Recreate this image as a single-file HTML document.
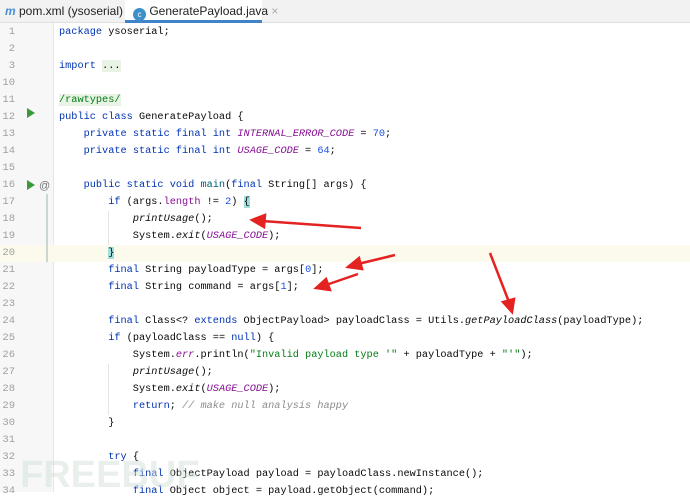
<!DOCTYPE html>
<html><head><style>
*{margin:0;padding:0;box-sizing:border-box}
body{width:690px;height:492px;overflow:hidden;background:#fff;position:relative;font-family:"Liberation Mono",monospace}
.tabs{position:absolute;left:0;top:0;width:690px;height:23px;background:#f2f2f2;border-bottom:1px solid #e0e0e0;font-family:"Liberation Sans",sans-serif;font-size:12px;color:#222}
.tab{position:absolute;top:0;height:23px;line-height:22px;white-space:nowrap}
.gut{position:absolute;left:0;top:23px;width:54px;height:469px;background:#f7f7f7;border-right:1px solid #e6e6e6}
.ln{position:absolute;left:0;width:15px;text-align:right;font-size:10.5px;color:#a0a0a0;height:17px;line-height:17px}
.cl{position:absolute;left:59px;height:17px;line-height:17px;font-size:10.25px;color:#080808;white-space:pre}
.k{color:#0033b3}.c{color:#871094;font-style:italic}.n{color:#1750eb}.s{color:#067d17}.i{font-style:italic}.cm{color:#8c8c8c;font-style:italic}.p{color:#871094}
</style></head><body>
<div class="tabs">
<div class="tab" style="left:5px"><span style="color:#4a8fd6;font-style:italic;font-weight:bold">m</span> pom.xml (ysoserial) <span style="color:#aaa">×</span></div>
<div class="tab" style="left:125px;width:137px;background:#fff;border-bottom:3px solid #4083c9;padding-left:8px"><span style="display:inline-block;width:13px;height:13px;border-radius:7px;background:#3d8fc9;color:#fff;font-size:8px;line-height:13px;text-align:center;vertical-align:-2px">c</span> GeneratePayload.java <span style="color:#aaa">×</span></div>
</div>
<div class="gut"></div>
<div style="position:absolute;left:0;top:245px;width:690px;height:17px;background:#fcfaed"></div>
<div style="position:absolute;left:46px;top:194px;width:2px;height:68px;background:#c8d8d0"></div>
<div style="position:absolute;left:108px;top:211px;width:1px;height:34px;background:#e4e4e4"></div>
<div style="position:absolute;left:108px;top:364px;width:1px;height:51px;background:#e4e4e4"></div>
<div id="c"></div>
<svg style="position:absolute;left:20px;top:108px" width="40" height="90"><polygon points="7,0 15,5 7,10" fill="#3a9a3a"/><polygon points="7,72 15,77 7,82" fill="#3a9a3a"/><text x="19" y="81" font-size="11" fill="#777" font-family="Liberation Sans">@</text></svg>
<svg style="position:absolute;left:0;top:0" width="690" height="492">
<g stroke="#e52222" stroke-width="2.5" fill="#e52222">
<line x1="361" y1="228" x2="262" y2="221"/><polygon points="252,220 265,215 264,227"/>
<line x1="395" y1="255" x2="358" y2="264"/><polygon points="348,267 359,258 362,269"/>
<line x1="358" y1="274" x2="326" y2="285"/><polygon points="316,288 326,279 330,290"/>
<line x1="490" y1="253" x2="509" y2="302"/><polygon points="512,312 503,302 514,299"/>
</g>
<text x="20" y="487" font-family="Liberation Sans" font-weight="bold" font-size="38" fill="#cfe0d6" opacity="0.45">FREEBUF</text>
</svg>
<script>
var L=[
["1",'<span class="k">package</span> ysoserial;'],
["2",''],
["3",'<span class="k">import</span> <span style="background:#e8f2e5">...</span>'],
["10",''],
["11",'<span style="background:#e8f2e5;color:#067d17">/rawtypes/</span>'],
["12",'<span class="k">public class</span> GeneratePayload {'],
["13",'    <span class="k">private static final int</span> <span class="c">INTERNAL_ERROR_CODE</span> = <span class="n">70</span>;'],
["14",'    <span class="k">private static final int</span> <span class="c">USAGE_CODE</span> = <span class="n">64</span>;'],
["15",''],
["16",'    <span class="k">public static void</span> <span style="color:#00627a">main</span>(<span class="k">final</span> String[] args) {'],
["17",'        <span class="k">if</span> (args.<span class="p">length</span> != <span class="n">2</span>) <span style="background:#9fe0dc">{</span>'],
["18",'            <span class="i">printUsage</span>();'],
["19",'            System.<span class="i">exit</span>(<span class="c">USAGE_CODE</span>);'],
["20",'        <span style="background:#9fe0dc">}</span>'],
["21",'        <span class="k">final</span> String payloadType = args[<span class="n">0</span>];'],
["22",'        <span class="k">final</span> String command = args[<span class="n">1</span>];'],
["23",''],
["24",'        <span class="k">final</span> Class&lt;? <span class="k">extends</span> ObjectPayload&gt; payloadClass = Utils.<span class="i">getPayloadClass</span>(payloadType);'],
["25",'        <span class="k">if</span> (payloadClass == <span class="k">null</span>) {'],
["26",'            System.<span class="c">err</span>.println(<span class="s">"Invalid payload type \'"</span> + payloadType + <span class="s">"\'"</span>);'],
["27",'            <span class="i">printUsage</span>();'],
["28",'            System.<span class="i">exit</span>(<span class="c">USAGE_CODE</span>);'],
["29",'            <span class="k">return</span>; <span class="cm">// make null analysis happy</span>'],
["30",'        }'],
["31",''],
["32",'        <span class="k">try</span> {'],
["33",'            <span class="k">final</span> ObjectPayload payload = payloadClass.newInstance();'],
["34",'            <span class="k">final</span> Object object = payload.getObject(command);']
];
var h='';L.forEach(function(l,i){var t=24+i*17;h+='<div class="ln" style="top:'+t+'px">'+l[0]+'</div><div class="cl" style="top:'+t+'px">'+l[1]+'</div>';});
document.getElementById('c').innerHTML=h;
</script>
</body></html>
